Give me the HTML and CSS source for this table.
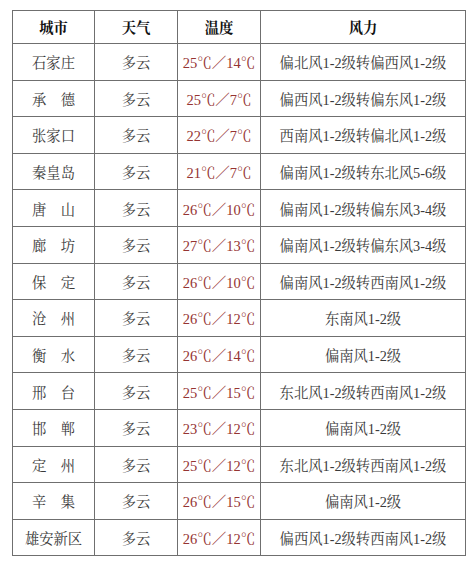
FILE: index.html
```html
<!DOCTYPE html>
<html lang="zh-CN">
<head>
<meta charset="utf-8">
<title>天气</title>
<link rel="stylesheet" href="styles.css">
</head>
<body>
<table class="wx">
  <colgroup>
    <col class="c-city">
    <col class="c-sky">
    <col class="c-temp">
    <col class="c-wind">
  </colgroup>
  <thead>
    <tr><th>城市</th><th>天气</th><th>温度</th><th>风力</th></tr>
  </thead>
  <tbody>
    <tr><td>石家庄</td><td>多云</td><td class="t">25℃／14℃</td><td>偏北风1-2级转偏西风1-2级</td></tr>
    <tr><td>承　德</td><td>多云</td><td class="t">25℃／7℃</td><td>偏西风1-2级转偏东风1-2级</td></tr>
    <tr><td>张家口</td><td>多云</td><td class="t">22℃／7℃</td><td>西南风1-2级转偏北风1-2级</td></tr>
    <tr><td>秦皇岛</td><td>多云</td><td class="t">21℃／7℃</td><td>偏南风1-2级转东北风5-6级</td></tr>
    <tr><td>唐　山</td><td>多云</td><td class="t">26℃／10℃</td><td>偏南风1-2级转偏东风3-4级</td></tr>
    <tr><td>廊　坊</td><td>多云</td><td class="t">27℃／13℃</td><td>偏南风1-2级转偏东风3-4级</td></tr>
    <tr><td>保　定</td><td>多云</td><td class="t">26℃／10℃</td><td>偏南风1-2级转西南风1-2级</td></tr>
    <tr><td>沧　州</td><td>多云</td><td class="t">26℃／12℃</td><td>东南风1-2级</td></tr>
    <tr><td>衡　水</td><td>多云</td><td class="t">26℃／14℃</td><td>偏南风1-2级</td></tr>
    <tr><td>邢　台</td><td>多云</td><td class="t">25℃／15℃</td><td>东北风1-2级转西南风1-2级</td></tr>
    <tr><td>邯　郸</td><td>多云</td><td class="t">23℃／12℃</td><td>偏南风1-2级</td></tr>
    <tr><td>定　州</td><td>多云</td><td class="t">25℃／12℃</td><td>东北风1-2级转西南风1-2级</td></tr>
    <tr><td>辛　集</td><td>多云</td><td class="t">26℃／15℃</td><td>偏南风1-2级</td></tr>
    <tr><td>雄安新区</td><td>多云</td><td class="t">26℃／12℃</td><td>偏西风1-2级转西南风1-2级</td></tr>
  </tbody>
</table>
</body>
</html>
```

FILE: styles.css
```css
html, body {
  background: #ffffff;
}
body {
  margin: 10px 0 0 12px;
  font-family: "Liberation Serif", "Noto Serif CJK SC", "Noto Sans CJK SC", serif;
  color: #3a3a3a;
}
.wx {
  border-collapse: collapse;
  table-layout: fixed;
  width: 453px;
  font-size: 14.3px;
}
.c-city { width: 82px; }
.c-sky { width: 83px; }
.c-temp { width: 83px; }
.c-wind { width: 205px; }
.wx thead tr { height: 33px; }
.wx tbody tr { height: 36.6px; }
.wx th, .wx td {
  border: 1px solid #6f6f6f;
  text-align: center;
  vertical-align: middle;
  padding: 0;
  white-space: nowrap;
  line-height: 16px;
}
.wx th {
  font-weight: bold;
  color: #111;
  padding-top: 1px;
}
.wx td {
  padding-top: 3px;
}
.wx td.t {
  color: #953432;
  font-size: 14.5px;
}
```
